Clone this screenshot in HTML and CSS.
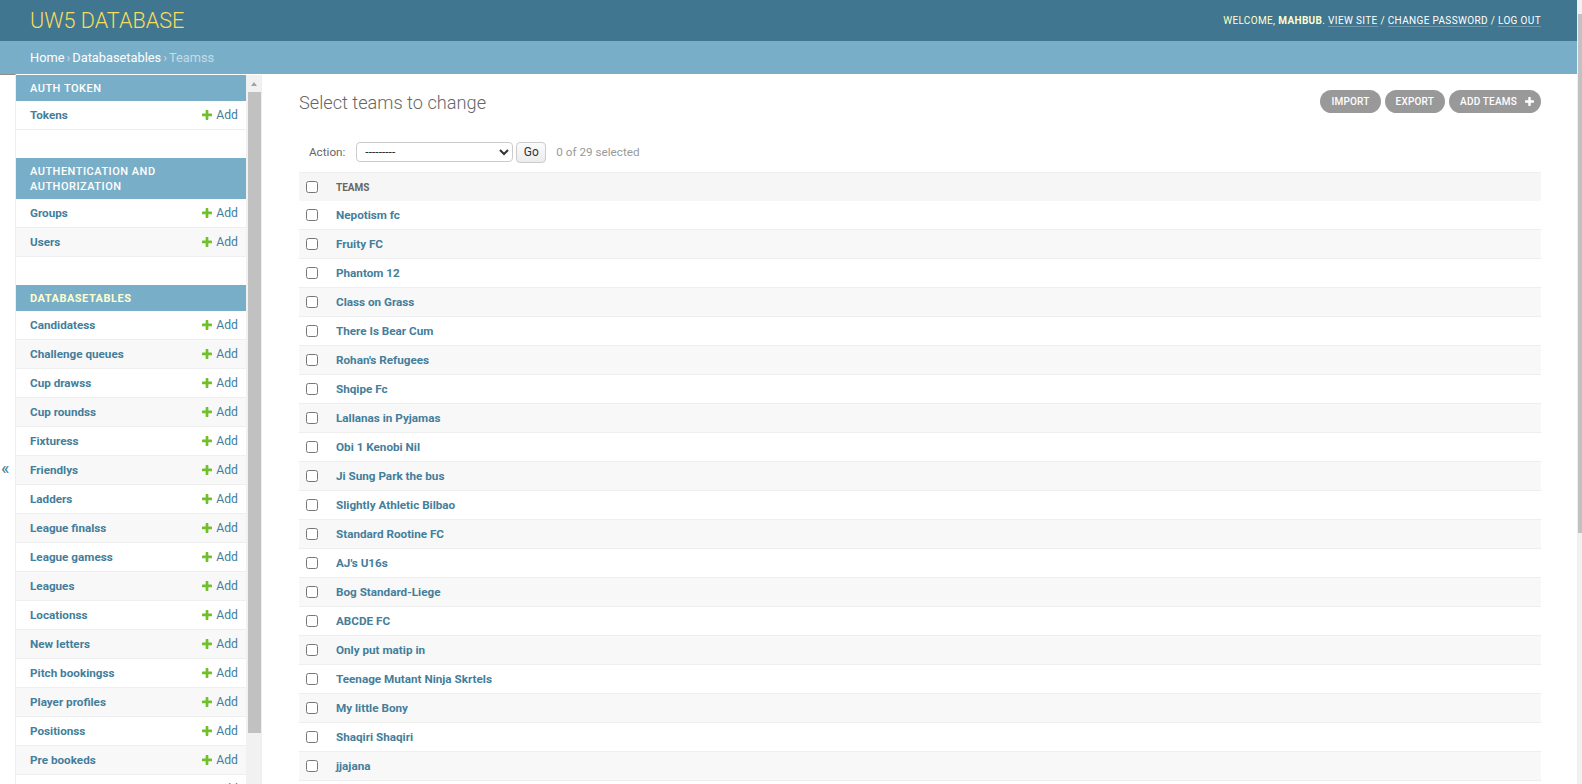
FILE: index.html
```html
<!DOCTYPE html>
<html lang="en">
<head>
<meta charset="utf-8">
<title>Select teams to change | UW5 Database</title>
<link rel="stylesheet" href="styles.css">
</head>
<body>
<div class="page">
  <header class="header">
    <h1 class="branding">UW5 DATABASE</h1>
    <div class="user-tools">Welcome, <strong>mahbub</strong>. <a href="#">View site</a> / <a href="#">Change password</a> / <a href="#">Log out</a></div>
  </header>
  <nav class="breadcrumbs"><a href="#">Home</a><span class="sep">›</span><a href="#">Databasetables</a><span class="sep">›</span>Teamss</nav>
  <div class="main">
    <button class="toggle" type="button">«</button>
    <aside class="sidebar">
      <div class="sidebar-inner">
        <div class="module">
          <div class="module-caption">Auth Token</div>
          <div class="model-row"><a class="model-name" href="#">Tokens</a><a class="addlink" href="#"><svg class="plus" viewBox="192 192 1408 1408"><path fill="#70bf2b" d="M1600 796v192q0 40-28 68t-68 28h-416v416q0 40-28 68t-68 28h-192q-40 0-68-28t-28-68v-416h-416q-40 0-68-28t-28-68v-192q0-40 28-68t68-28h416v-416q0-40 28-68t68-28h192q40 0 68 28t28 68v416h416q40 0 68 28t28 68z"/></svg>Add</a></div>
        </div>
        <div class="module">
          <div class="module-caption">Authentication and Authorization</div>
          <div class="model-row"><a class="model-name" href="#">Groups</a><a class="addlink" href="#"><svg class="plus" viewBox="192 192 1408 1408"><path fill="#70bf2b" d="M1600 796v192q0 40-28 68t-68 28h-416v416q0 40-28 68t-68 28h-192q-40 0-68-28t-28-68v-416h-416q-40 0-68-28t-28-68v-192q0-40 28-68t68-28h416v-416q0-40 28-68t68-28h192q40 0 68 28t28 68v416h416q40 0 68 28t28 68z"/></svg>Add</a></div>
          <div class="model-row"><a class="model-name" href="#">Users</a><a class="addlink" href="#"><svg class="plus" viewBox="192 192 1408 1408"><path fill="#70bf2b" d="M1600 796v192q0 40-28 68t-68 28h-416v416q0 40-28 68t-68 28h-192q-40 0-68-28t-28-68v-416h-416q-40 0-68-28t-28-68v-192q0-40 28-68t68-28h416v-416q0-40 28-68t68-28h192q40 0 68 28t28 68v416h416q40 0 68 28t28 68z"/></svg>Add</a></div>
        </div>
        <div class="module">
          <div class="module-caption current">Databasetables</div>
          <div class="model-row"><a class="model-name" href="#">Candidatess</a><a class="addlink" href="#"><svg class="plus" viewBox="192 192 1408 1408"><path fill="#70bf2b" d="M1600 796v192q0 40-28 68t-68 28h-416v416q0 40-28 68t-68 28h-192q-40 0-68-28t-28-68v-416h-416q-40 0-68-28t-28-68v-192q0-40 28-68t68-28h416v-416q0-40 28-68t68-28h192q40 0 68 28t28 68v416h416q40 0 68 28t28 68z"/></svg>Add</a></div>
          <div class="model-row"><a class="model-name" href="#">Challenge queues</a><a class="addlink" href="#"><svg class="plus" viewBox="192 192 1408 1408"><path fill="#70bf2b" d="M1600 796v192q0 40-28 68t-68 28h-416v416q0 40-28 68t-68 28h-192q-40 0-68-28t-28-68v-416h-416q-40 0-68-28t-28-68v-192q0-40 28-68t68-28h416v-416q0-40 28-68t68-28h192q40 0 68 28t28 68v416h416q40 0 68 28t28 68z"/></svg>Add</a></div>
          <div class="model-row"><a class="model-name" href="#">Cup drawss</a><a class="addlink" href="#"><svg class="plus" viewBox="192 192 1408 1408"><path fill="#70bf2b" d="M1600 796v192q0 40-28 68t-68 28h-416v416q0 40-28 68t-68 28h-192q-40 0-68-28t-28-68v-416h-416q-40 0-68-28t-28-68v-192q0-40 28-68t68-28h416v-416q0-40 28-68t68-28h192q40 0 68 28t28 68v416h416q40 0 68 28t28 68z"/></svg>Add</a></div>
          <div class="model-row"><a class="model-name" href="#">Cup roundss</a><a class="addlink" href="#"><svg class="plus" viewBox="192 192 1408 1408"><path fill="#70bf2b" d="M1600 796v192q0 40-28 68t-68 28h-416v416q0 40-28 68t-68 28h-192q-40 0-68-28t-28-68v-416h-416q-40 0-68-28t-28-68v-192q0-40 28-68t68-28h416v-416q0-40 28-68t68-28h192q40 0 68 28t28 68v416h416q40 0 68 28t28 68z"/></svg>Add</a></div>
          <div class="model-row"><a class="model-name" href="#">Fixturess</a><a class="addlink" href="#"><svg class="plus" viewBox="192 192 1408 1408"><path fill="#70bf2b" d="M1600 796v192q0 40-28 68t-68 28h-416v416q0 40-28 68t-68 28h-192q-40 0-68-28t-28-68v-416h-416q-40 0-68-28t-28-68v-192q0-40 28-68t68-28h416v-416q0-40 28-68t68-28h192q40 0 68 28t28 68v416h416q40 0 68 28t28 68z"/></svg>Add</a></div>
          <div class="model-row"><a class="model-name" href="#">Friendlys</a><a class="addlink" href="#"><svg class="plus" viewBox="192 192 1408 1408"><path fill="#70bf2b" d="M1600 796v192q0 40-28 68t-68 28h-416v416q0 40-28 68t-68 28h-192q-40 0-68-28t-28-68v-416h-416q-40 0-68-28t-28-68v-192q0-40 28-68t68-28h416v-416q0-40 28-68t68-28h192q40 0 68 28t28 68v416h416q40 0 68 28t28 68z"/></svg>Add</a></div>
          <div class="model-row"><a class="model-name" href="#">Ladders</a><a class="addlink" href="#"><svg class="plus" viewBox="192 192 1408 1408"><path fill="#70bf2b" d="M1600 796v192q0 40-28 68t-68 28h-416v416q0 40-28 68t-68 28h-192q-40 0-68-28t-28-68v-416h-416q-40 0-68-28t-28-68v-192q0-40 28-68t68-28h416v-416q0-40 28-68t68-28h192q40 0 68 28t28 68v416h416q40 0 68 28t28 68z"/></svg>Add</a></div>
          <div class="model-row"><a class="model-name" href="#">League finalss</a><a class="addlink" href="#"><svg class="plus" viewBox="192 192 1408 1408"><path fill="#70bf2b" d="M1600 796v192q0 40-28 68t-68 28h-416v416q0 40-28 68t-68 28h-192q-40 0-68-28t-28-68v-416h-416q-40 0-68-28t-28-68v-192q0-40 28-68t68-28h416v-416q0-40 28-68t68-28h192q40 0 68 28t28 68v416h416q40 0 68 28t28 68z"/></svg>Add</a></div>
          <div class="model-row"><a class="model-name" href="#">League gamess</a><a class="addlink" href="#"><svg class="plus" viewBox="192 192 1408 1408"><path fill="#70bf2b" d="M1600 796v192q0 40-28 68t-68 28h-416v416q0 40-28 68t-68 28h-192q-40 0-68-28t-28-68v-416h-416q-40 0-68-28t-28-68v-192q0-40 28-68t68-28h416v-416q0-40 28-68t68-28h192q40 0 68 28t28 68v416h416q40 0 68 28t28 68z"/></svg>Add</a></div>
          <div class="model-row"><a class="model-name" href="#">Leagues</a><a class="addlink" href="#"><svg class="plus" viewBox="192 192 1408 1408"><path fill="#70bf2b" d="M1600 796v192q0 40-28 68t-68 28h-416v416q0 40-28 68t-68 28h-192q-40 0-68-28t-28-68v-416h-416q-40 0-68-28t-28-68v-192q0-40 28-68t68-28h416v-416q0-40 28-68t68-28h192q40 0 68 28t28 68v416h416q40 0 68 28t28 68z"/></svg>Add</a></div>
          <div class="model-row"><a class="model-name" href="#">Locationss</a><a class="addlink" href="#"><svg class="plus" viewBox="192 192 1408 1408"><path fill="#70bf2b" d="M1600 796v192q0 40-28 68t-68 28h-416v416q0 40-28 68t-68 28h-192q-40 0-68-28t-28-68v-416h-416q-40 0-68-28t-28-68v-192q0-40 28-68t68-28h416v-416q0-40 28-68t68-28h192q40 0 68 28t28 68v416h416q40 0 68 28t28 68z"/></svg>Add</a></div>
          <div class="model-row"><a class="model-name" href="#">New letters</a><a class="addlink" href="#"><svg class="plus" viewBox="192 192 1408 1408"><path fill="#70bf2b" d="M1600 796v192q0 40-28 68t-68 28h-416v416q0 40-28 68t-68 28h-192q-40 0-68-28t-28-68v-416h-416q-40 0-68-28t-28-68v-192q0-40 28-68t68-28h416v-416q0-40 28-68t68-28h192q40 0 68 28t28 68v416h416q40 0 68 28t28 68z"/></svg>Add</a></div>
          <div class="model-row"><a class="model-name" href="#">Pitch bookingss</a><a class="addlink" href="#"><svg class="plus" viewBox="192 192 1408 1408"><path fill="#70bf2b" d="M1600 796v192q0 40-28 68t-68 28h-416v416q0 40-28 68t-68 28h-192q-40 0-68-28t-28-68v-416h-416q-40 0-68-28t-28-68v-192q0-40 28-68t68-28h416v-416q0-40 28-68t68-28h192q40 0 68 28t28 68v416h416q40 0 68 28t28 68z"/></svg>Add</a></div>
          <div class="model-row"><a class="model-name" href="#">Player profiles</a><a class="addlink" href="#"><svg class="plus" viewBox="192 192 1408 1408"><path fill="#70bf2b" d="M1600 796v192q0 40-28 68t-68 28h-416v416q0 40-28 68t-68 28h-192q-40 0-68-28t-28-68v-416h-416q-40 0-68-28t-28-68v-192q0-40 28-68t68-28h416v-416q0-40 28-68t68-28h192q40 0 68 28t28 68v416h416q40 0 68 28t28 68z"/></svg>Add</a></div>
          <div class="model-row"><a class="model-name" href="#">Positionss</a><a class="addlink" href="#"><svg class="plus" viewBox="192 192 1408 1408"><path fill="#70bf2b" d="M1600 796v192q0 40-28 68t-68 28h-416v416q0 40-28 68t-68 28h-192q-40 0-68-28t-28-68v-416h-416q-40 0-68-28t-28-68v-192q0-40 28-68t68-28h416v-416q0-40 28-68t68-28h192q40 0 68 28t28 68v416h416q40 0 68 28t28 68z"/></svg>Add</a></div>
          <div class="model-row"><a class="model-name" href="#">Pre bookeds</a><a class="addlink" href="#"><svg class="plus" viewBox="192 192 1408 1408"><path fill="#70bf2b" d="M1600 796v192q0 40-28 68t-68 28h-416v416q0 40-28 68t-68 28h-192q-40 0-68-28t-28-68v-416h-416q-40 0-68-28t-28-68v-192q0-40 28-68t68-28h416v-416q0-40 28-68t68-28h192q40 0 68 28t28 68v416h416q40 0 68 28t28 68z"/></svg>Add</a></div>
          <div class="model-row"><a class="model-name" href="#">Registrationss</a><a class="addlink" href="#"><svg class="plus" viewBox="192 192 1408 1408"><path fill="#70bf2b" d="M1600 796v192q0 40-28 68t-68 28h-416v416q0 40-28 68t-68 28h-192q-40 0-68-28t-28-68v-416h-416q-40 0-68-28t-28-68v-192q0-40 28-68t68-28h416v-416q0-40 28-68t68-28h192q40 0 68 28t28 68v416h416q40 0 68 28t28 68z"/></svg>Add</a></div>
          <div class="model-row"><a class="model-name" href="#">Resultss</a><a class="addlink" href="#">Add</a></div>
          <div class="model-row current-model"><a class="model-name" href="#">Teamss</a><a class="addlink" href="#">Add</a></div>
        </div>
      </div>
      <div class="vscroll"><div class="vscroll-arrow"></div><div class="vscroll-thumb"></div></div>
    </aside>
    <main class="content">
      <div class="content-head">
        <h1 class="title">Select teams to change</h1>
        <ul class="object-tools">
          <li><a href="#" class="tool">Import</a></li>
          <li><a href="#" class="tool">Export</a></li>
          <li><a href="#" class="tool addtool">Add teams<svg class="tool-plus" viewBox="192 192 1408 1408"><path fill="#fff" d="M1600 796v192q0 40-28 68t-68 28h-416v416q0 40-28 68t-68 28h-192q-40 0-68-28t-28-68v-416h-416q-40 0-68-28t-28-68v-192q0-40 28-68t68-28h416v-416q0-40 28-68t68-28h192q40 0 68 28t28 68v416h416q40 0 68 28t28 68z"/></svg></a></li>
        </ul>
      </div>
      <div class="actions">
        <label class="action-label" for="act">Action:</label>
        <select id="act" class="action-select"><option>---------</option></select>
        <button class="go" type="button">Go</button>
        <span class="counter">0 of 29 selected</span>
      </div>
      <div class="results">
        <div class="thead"><div class="cb"><input type="checkbox"></div><div class="col-head">Teams</div></div>
        <div class="row"><div class="cb"><input type="checkbox"></div><a class="team" href="#">Nepotism fc</a></div>
        <div class="row"><div class="cb"><input type="checkbox"></div><a class="team" href="#">Fruity FC</a></div>
        <div class="row"><div class="cb"><input type="checkbox"></div><a class="team" href="#">Phantom 12</a></div>
        <div class="row"><div class="cb"><input type="checkbox"></div><a class="team" href="#">Class on Grass</a></div>
        <div class="row"><div class="cb"><input type="checkbox"></div><a class="team" href="#">There Is Bear Cum</a></div>
        <div class="row"><div class="cb"><input type="checkbox"></div><a class="team" href="#">Rohan's Refugees</a></div>
        <div class="row"><div class="cb"><input type="checkbox"></div><a class="team" href="#">Shqipe Fc</a></div>
        <div class="row"><div class="cb"><input type="checkbox"></div><a class="team" href="#">Lallanas in Pyjamas</a></div>
        <div class="row"><div class="cb"><input type="checkbox"></div><a class="team" href="#">Obi 1 Kenobi Nil</a></div>
        <div class="row"><div class="cb"><input type="checkbox"></div><a class="team" href="#">Ji Sung Park the bus</a></div>
        <div class="row"><div class="cb"><input type="checkbox"></div><a class="team" href="#">Slightly Athletic Bilbao</a></div>
        <div class="row"><div class="cb"><input type="checkbox"></div><a class="team" href="#">Standard Rootine FC</a></div>
        <div class="row"><div class="cb"><input type="checkbox"></div><a class="team" href="#">AJ's U16s</a></div>
        <div class="row"><div class="cb"><input type="checkbox"></div><a class="team" href="#">Bog Standard-Liege</a></div>
        <div class="row"><div class="cb"><input type="checkbox"></div><a class="team" href="#">ABCDE FC</a></div>
        <div class="row"><div class="cb"><input type="checkbox"></div><a class="team" href="#">Only put matip in</a></div>
        <div class="row"><div class="cb"><input type="checkbox"></div><a class="team" href="#">Teenage Mutant Ninja Skrtels</a></div>
        <div class="row"><div class="cb"><input type="checkbox"></div><a class="team" href="#">My little Bony</a></div>
        <div class="row"><div class="cb"><input type="checkbox"></div><a class="team" href="#">Shaqiri Shaqiri</a></div>
        <div class="row"><div class="cb"><input type="checkbox"></div><a class="team" href="#">jjajana</a></div>
      </div>
    </main>
  </div>
</div>
<div class="page-scroll"><div class="page-scroll-thumb"></div></div>
</body>
</html>
```

FILE: styles.css
```css
* { box-sizing: border-box; }
html, body { margin: 0; height: 784px; overflow: hidden; }
body {
  display: flex;
  font-family: Roboto, "Liberation Sans", "DejaVu Sans", sans-serif;
  color: #333;
  background: #fff;
}
a { text-decoration: none; }

.page { flex: 1; min-width: 0; display: flex; flex-direction: column; }

.page-scroll {
  flex: 0 0 5px;
  background: #f1f1f1;
  padding-top: 14px;
  display: flex;
  flex-direction: column;
  align-items: flex-end;
}
.page-scroll-thumb { width: 4px; height: 519px; background: #c1c1c1; }

/* header */
.header {
  flex: 0 0 41px;
  background: #417690;
  display: flex;
  align-items: center;
  justify-content: space-between;
  padding: 0 36px 0 30px;
}
.branding { margin: 0; font-size: 21.6px; font-weight: 300; color: #f5dd5d; line-height: 24px; }
.user-tools {
  font-size: 10px;
  letter-spacing: 0.35px;
  text-transform: uppercase;
  color: #ffc;
  line-height: 14px;
}
.user-tools strong { font-weight: 700; }
.user-tools a { color: #fff; border-bottom: 1px solid rgba(255,255,255,0.25); }

.breadcrumbs {
  flex: 0 0 33px;
  background: #79aec8;
  padding: 0 30px;
  display: flex;
  align-items: center;
  font-size: 12.8px;
  color: #c4dce8;
}
.breadcrumbs a { color: #fff; }
.breadcrumbs .sep { margin: 0 2px; }

/* main */
.main { flex: 1; min-height: 0; display: flex; align-items: flex-start; }

.toggle {
  flex: 0 0 16px;
  height: 786px;
  margin: 0;
  padding: 0 0 0 1px;
  border: 0;
  border-top: 1px solid #8c8c8c;
  border-right: 1px solid #eee;
  background: #fff;
  display: flex;
  align-items: center;
  font-family: Roboto, sans-serif;
  font-size: 18px;
  color: #447e9b;
}

.sidebar {
  flex: 0 0 246px;
  height: 710px;
  display: flex;
  border-top: 1px solid transparent;
  border-right: 1px solid #eee;
  overflow: hidden;
}
.sidebar-inner { flex: 0 0 230px; }
.vscroll { flex: 0 0 15px; background: #f1f1f1; display: flex; flex-direction: column; align-items: center; }
.vscroll-arrow {
  margin-top: 7px;
  width: 0; height: 0;
  border-left: 3.5px solid transparent;
  border-right: 3.5px solid transparent;
  border-bottom: 4px solid #a3a3a3;
}
.vscroll-thumb { margin-top: 6px; margin-left: 2px; width: 13px; height: 641px; background: #c1c1c1; }

.module { margin-bottom: 28px; }
.module-caption {
  background: #79aec8;
  color: #fff;
  font-size: 11px;
  letter-spacing: 0.5px;
  text-transform: uppercase;
  padding: 6px 14px 5px;
  line-height: 15px;
  font-weight: 500;
}
.module-caption.current { color: #ffc; font-weight: 700; }
.model-row {
  height: 29px;
  display: flex;
  align-items: center;
  justify-content: space-between;
  padding: 0 8px 0 14px;
  border-bottom: 1px solid #eee;
  font-size: 11.7px;
}
.model-row:nth-child(odd) { background: #f8f8f8; }
.model-row.current-model { background: #ffc; }
.model-name { color: #447e9b; font-weight: 700; }
.addlink { color: #447e9b; display: flex; align-items: center; font-size: 12.2px; }
.plus { width: 10px; height: 10px; margin-right: 4px; }

/* content */
.content { flex: 1; min-width: 0; padding: 16px 36px 0 37px; }
.content-head { display: flex; justify-content: space-between; align-items: flex-start; }
.title { margin: 0; font-size: 18.2px; font-weight: 300; color: #666; line-height: 25px; }
.object-tools { display: flex; gap: 4px; margin: 0; padding: 0; list-style: none; }
.tool {
  height: 23px;
  padding: 0 11px;
  border-radius: 12px;
  background: #999;
  color: #fff;
  font-size: 10px;
  font-weight: 500;
  letter-spacing: 0.2px;
  text-transform: uppercase;
  display: flex;
  align-items: center;
}
.addtool { padding: 0 7px 0 11px; }
.tool-plus { width: 9px; height: 9px; margin-left: 8px; }

.actions {
  margin-top: 17px;
  height: 40px;
  padding: 0 10px;
  display: flex;
  align-items: center;
  font-size: 11.7px;
  color: #666;
}
.action-label { margin-right: 11px; }
.action-select {
  width: 157px;
  height: 20px;
  margin: 0 3px 0 0;
  padding: 0 0 0 4px;
  border: 1px solid #ccc;
  border-radius: 4px;
  background: #fff;
  font-family: Roboto, sans-serif;
  font-size: 12px;
  color: #333;
}
.go {
  width: 30px;
  height: 21px;
  margin: 0 10px 0 0;
  padding: 0;
  border: 1px solid #ccc;
  border-radius: 4px;
  background: linear-gradient(#fbfbfb, #ececec);
  font-family: Roboto, sans-serif;
  font-size: 12px;
  color: #333;
}
.counter { color: #999; }

.thead {
  height: 29px;
  display: flex;
  align-items: center;
  background: #f6f6f6;
  border-top: 1px solid #eee;
}
.col-head { font-size: 10px; font-weight: 700; text-transform: uppercase; color: #666; }
.row {
  height: 29px;
  display: flex;
  align-items: center;
  border-bottom: 1px solid #eee;
}
.row:nth-child(odd) { background: #f8f8f8; }
.cb { flex: 0 0 37px; padding-left: 7px; display: flex; align-items: center; }
.cb input { width: 12px; height: 12px; margin: 0; }
.team { font-size: 11.7px; font-weight: 700; color: #447e9b; padding-bottom: 1px; }
```
